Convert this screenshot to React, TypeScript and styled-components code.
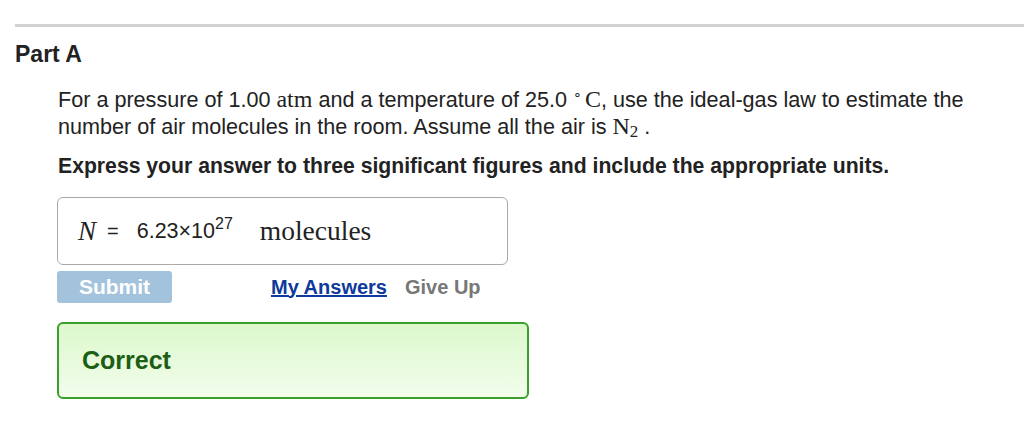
import React from "react";
import styled, { createGlobalStyle } from "styled-components";

const Global = createGlobalStyle`
  html, body { margin: 0; padding: 0; background: #fff; }
  body { font-family: "Liberation Sans", Arial, sans-serif; color: #222; }
`;

const Page = styled.div`
  padding-top: 24px;
  width: 1024px;
  height: 431px;
  box-sizing: border-box;
  overflow: hidden;
`;

const Divider = styled.div`
  margin-left: 15px;
  height: 3px;
  background: #d2d2d2;
`;

const PartTitle = styled.h2`
  margin: 14px 0 0 15px;
  font-size: 23px;
  line-height: 26px;
  font-weight: bold;
  color: #222;
`;

const Body = styled.div`
  padding-left: 57px;
  display: flex;
  flex-direction: column;
  align-items: flex-start;
`;

const Prompt = styled.p`
  margin: 19px 0 0 1px;
  font-size: 21.6px;
  line-height: 27px;
  color: #222;
  width: 950px;
`;

const MathRm = styled.span`
  font-family: "Liberation Serif", "Times New Roman", serif;
  font-size: 24px;
  line-height: 0;
`;

const Degree = styled.span`
  display: inline-block;
  font-size: 14px;
  line-height: 0;
  transform: translateY(-8px);
  margin-right: 3px;
`;

const Sub = styled.span`
  display: inline-block;
  font-size: 17px;
  line-height: 0;
  transform: translateY(3px);
`;

const Instruction = styled.p`
  margin: 13px 0 0 1px;
  font-size: 21.2px;
  line-height: 26px;
  font-weight: bold;
  color: #222;
  white-space: nowrap;
`;

const AnswerBox = styled.div`
  margin-top: 18px;
  width: 451px;
  height: 68px;
  box-sizing: border-box;
  border: 1px solid #aaa;
  border-radius: 6px;
  display: flex;
  align-items: center;
  padding-left: 20px;
`;

const MathVar = styled.span`
  font-family: "Liberation Serif", "Times New Roman", serif;
  font-style: italic;
  font-size: 27px;
  color: #222;
`;

const Equals = styled.span`
  font-size: 20px;
  margin-left: 11px;
  color: #222;
`;

const Value = styled.span`
  font-size: 21.5px;
  margin-left: 18px;
  color: #222;
`;

const Exp = styled.span`
  display: inline-block;
  font-size: 16px;
  transform: translateY(-9px);
`;

const Unit = styled.span`
  font-family: "Liberation Serif", "Times New Roman", serif;
  font-size: 27.5px;
  margin-left: 27px;
  color: #222;
`;

const ActionRow = styled.div`
  margin-top: 6px;
  display: flex;
  align-items: center;
`;

const SubmitButton = styled.button`
  width: 115px;
  height: 32px;
  border: none;
  border-radius: 3px;
  background: #a3c3dd;
  color: #fff;
  font-family: "Liberation Sans", Arial, sans-serif;
  font-size: 21px;
  font-weight: bold;
  padding: 0;
`;

const Links = styled.div`
  margin-left: 99px;
  display: flex;
  gap: 18px;
  align-items: center;
`;

const AnswersLink = styled.a`
  font-size: 20px;
  font-weight: bold;
  color: #0e3a9b;
  text-decoration: underline;
  cursor: pointer;
`;

const GiveUp = styled.span`
  font-size: 20px;
  font-weight: bold;
  color: #777;
`;

const Feedback = styled.div`
  margin-top: 19px;
  width: 472px;
  height: 77px;
  box-sizing: border-box;
  border: 2px solid #3a9f2c;
  border-radius: 6px;
  background: linear-gradient(#dcf8cc, #f2fdec);
  display: flex;
  align-items: center;
  padding-left: 23px;
`;

const FeedbackTitle = styled.span`
  font-size: 25px;
  font-weight: bold;
  color: #1b5e14;
`;

export default function App() {
  return (
    <>
      <Global />
      <Page>
        <Divider />
        <PartTitle>Part A</PartTitle>
        <Body>
          <Prompt>
            For a pressure of 1.00 <MathRm>atm</MathRm> and a temperature of 25.0{" "}
            <Degree>∘</Degree>
            <MathRm>C</MathRm>, use the ideal-gas law to estimate the number of air
            molecules in the room. Assume all the air is{" "}
            <MathRm>
              N<Sub>2</Sub>
            </MathRm>{" "}
            .
          </Prompt>
          <Instruction>
            Express your answer to three significant figures and include the appropriate units.
          </Instruction>
          <AnswerBox>
            <MathVar>N</MathVar>
            <Equals>=</Equals>
            <Value>
              6.23×10<Exp>27</Exp>
            </Value>
            <Unit>molecules</Unit>
          </AnswerBox>
          <ActionRow>
            <SubmitButton>Submit</SubmitButton>
            <Links>
              <AnswersLink>My Answers</AnswersLink>
              <GiveUp>Give Up</GiveUp>
            </Links>
          </ActionRow>
          <Feedback>
            <FeedbackTitle>Correct</FeedbackTitle>
          </Feedback>
        </Body>
      </Page>
    </>
  );
}
